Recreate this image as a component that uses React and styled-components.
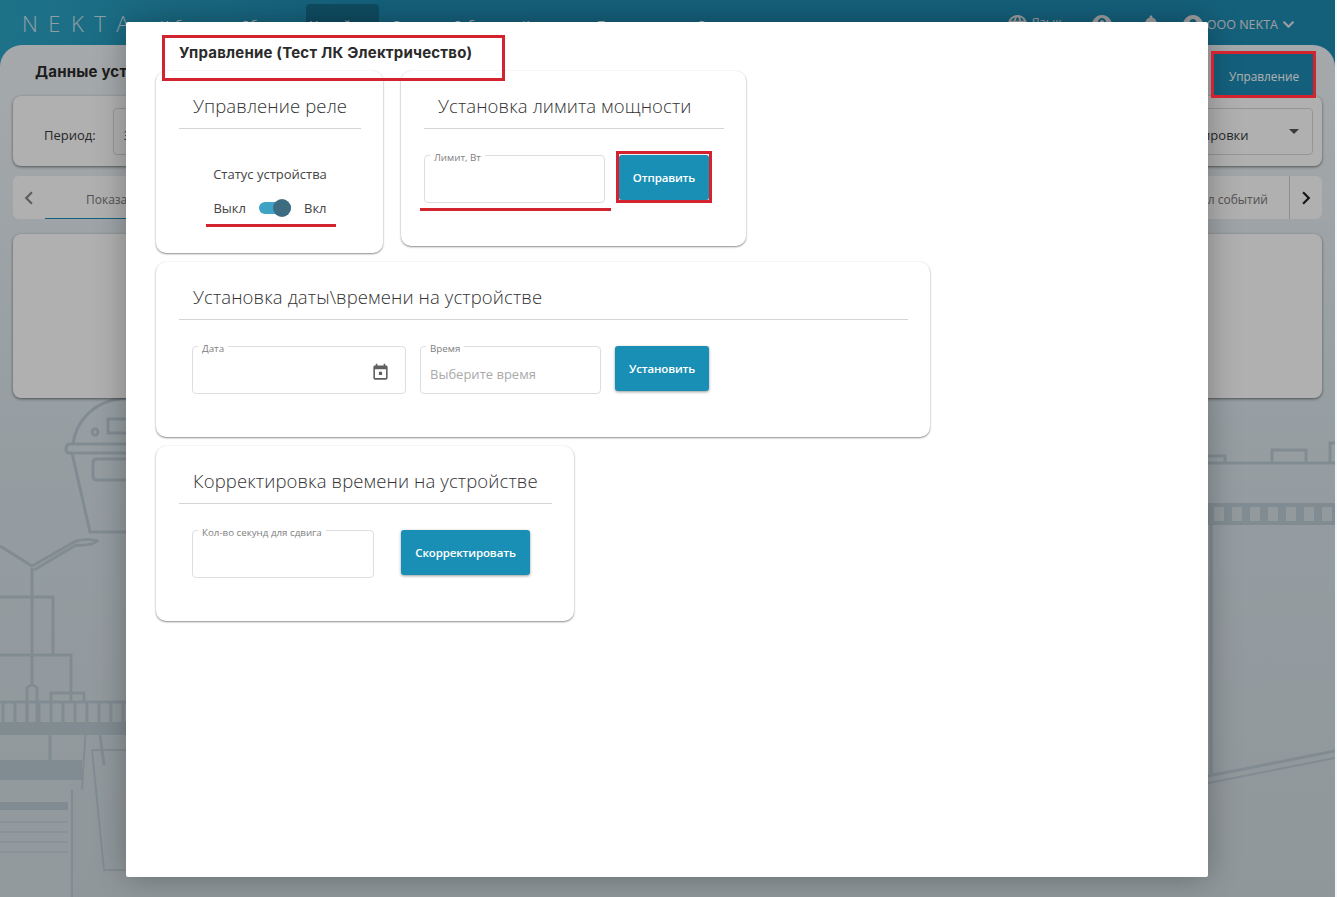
import React from 'react';
import styled, { createGlobalStyle } from 'styled-components';
import { FaChevronDown } from 'react-icons/fa';
import { MdLanguage, MdHelp, MdNotifications, MdAccountCircle, MdChevronLeft, MdChevronRight, MdArrowDropDown } from 'react-icons/md';

const GlobalStyle = createGlobalStyle`
  html, body {
    margin: 0;
    padding: 0;
    background: #f4f8fa;
    font-family: "Open Sans", "Liberation Sans", sans-serif;
    overflow: hidden;
  }
  * { box-sizing: border-box; }
`

const Shell = styled.div`
  position: relative;
  width: 1335px;
  height: 897px;
  overflow: hidden;
  background: linear-gradient(90deg, #2ba5c6 0, #1f8db4 26%, #1e8cb3 100%);
`

const Header = styled.header`
  display: flex;
  align-items: center;
  height: 45px;
  padding: 4px 40px 0 22px;
`

const Logo = styled.div`
  width: 134px;
  font-size: 22px;
  font-weight: 300;
  letter-spacing: 10.5px;
  color: #d3e6ec;
  margin-top: -4px;
  white-space: nowrap;
`

const Nav = styled.nav`
  display: flex;
  align-self: flex-start;
`

const NavItem = styled.a`
  width: ${(p) => p.$w}px;
  height: 41px;
  margin-right: ${(p) => (p.$active ? 9 : 0)}px;
  padding: 14px 4px 0;
  font-size: 12px;
  line-height: 16px;
  color: #fff;
  white-space: nowrap;
  border-radius: 4px 4px 0 0;
  background: ${(p) => (p.$active ? '#176f8e' : 'transparent')};
`

const HeaderRight = styled.div`
  display: flex;
  align-items: center;
  margin-left: auto;
  color: #e6e6e6;
  font-size: 12.5px;
`

const HeaderIcon = styled.span`
  display: flex;
  font-size: ${(p) => p.$size || 23}px;
  margin-left: ${(p) => p.$gap || 0}px;
`

const HeaderText = styled.span`
  margin-left: ${(p) => p.$gap || 0}px;
  margin-top: ${(p) => (p.$lift ? -5 : 0)}px;
  white-space: nowrap;
`

const Panel = styled.main`
  position: relative;
  height: 852px;
  padding: 0 13px;
  border-radius: 22px 22px 0 0;
  background: linear-gradient(180deg, #f0f5f8 0, #d9e5eb 45%, #d0dbe0 100%);
  overflow: hidden;
`

const Scenery = styled.svg`
  position: absolute;
  left: 0;
  top: -45px;
  width: 1335px;
  height: 897px;
`

const Content = styled.div`
  position: relative;
`

const TopRow = styled.div`
  display: flex;
  justify-content: space-between;
  height: 51px;
  padding: 8px 7px 0 22px;
`

const PageTitle = styled.h1`
  margin: 10px 0 0;
  font-family: Inter, "Liberation Sans", sans-serif;
  font-size: 15px;
  line-height: 18px;
  font-weight: 700;
  letter-spacing: 0.2px;
  color: #2b2b2b;
`

const ControlButton = styled.button`
  width: 102px;
  height: 43px;
  padding-top: 4px;
  border: 0;
  border-radius: 3px;
  background: #1d8bb4;
  color: #fff;
  font-family: inherit;
  font-size: 11.8px;
`

const FilterCard = styled.section`
  display: flex;
  justify-content: space-between;
  align-items: center;
  height: 70px;
  padding: 0 9px 0 31px;
  background: #fff;
  border-radius: 8px;
  box-shadow: 0 1px 3px rgba(0, 0, 0, 0.5);
`

const FilterGroup = styled.div`
  display: flex;
  align-items: center;
  gap: 17px;
`

const FilterText = styled.span`
  padding-top: 8px;
  font-size: 13px;
  color: #3a3a3a;
  white-space: nowrap;
`

const SelectBox = styled.div`
  display: flex;
  align-items: center;
  justify-content: space-between;
  width: ${(p) => p.$w}px;
  height: 47px;
  padding: 0 6px 0 10px;
  border: 1px solid #d8d8d8;
  border-radius: 4px;
`

const TabBar = styled.section`
  display: flex;
  align-items: stretch;
  height: 43px;
  margin-top: 10px;
  background: #fff;
  border-radius: 6px;
`

const TabArrow = styled.div`
  display: flex;
  align-items: center;
  justify-content: center;
  width: ${(p) => (p.$right ? 33 : 32)}px;
  font-size: 26px;
  color: ${(p) => (p.$right ? '#222' : '#888')};
  border-left: ${(p) => (p.$right ? '1px solid #ccc' : '0')};
`

const TabList = styled.div`
  display: flex;
  flex: 1;
  justify-content: space-between;
  align-items: center;
  font-size: 12px;
  color: #777;
`

const Tab = styled.span`
  align-self: stretch;
  display: flex;
  align-items: center;
  padding: 4px 0 0 41px;
  width: ${(p) => p.$w}px;
  border-bottom: ${(p) => (p.$active ? '1px solid #1d8bb4' : '0')};
  white-space: nowrap;
`

const ChartCard = styled.section`
  height: 164px;
  margin-top: 15px;
  background: #fff;
  border-radius: 8px;
  box-shadow: 0 1px 3px rgba(0, 0, 0, 0.5);
`

const Backdrop = styled.div`
  position: absolute;
  inset: 0;
  background: rgba(0, 0, 0, 0.31);
`

const Modal = styled.div`
  position: absolute;
  left: 126px;
  top: 22px;
  width: 1082px;
  height: 855px;
  padding: 22px 30px;
  background: #fff;
  border-radius: 2px;
  box-shadow: 0 0 32px rgba(0, 0, 0, 0.3);
`

const ModalTitle = styled.h2`
  margin: 0 0 9px 23px;
  font-family: Inter, "Liberation Sans", sans-serif;
  font-size: 15px;
  line-height: 18px;
  font-weight: 700;
  letter-spacing: 0.2px;
  color: #2b2b2b;
`

const Stack = styled.div`
  display: flex;
  flex-direction: column;
  gap: 9px;
`

const CardRow = styled.div`
  display: flex;
  align-items: flex-start;
  gap: 18px;
`

const Card = styled.section`
  width: ${(p) => p.$w}px;
  height: ${(p) => p.$h || 175}px;
  padding: 0 22px 0 23px;
  background: #fff;
  border-radius: 10px;
  box-shadow: 0 1px 2px rgba(0, 0, 0, 0.45), 0 0 2px rgba(0, 0, 0, 0.06);
`

const CardHeading = styled.h3`
  height: 58px;
  margin: 0 0 26px;
  padding: 22px 14px 0;
  border-bottom: 1px solid #d4d4d4;
  font-size: 18.5px;
  line-height: 26px;
  font-weight: 300;
  letter-spacing: 0.12px;
  color: #333;
  white-space: nowrap;
`

const FormRow = styled.div`
  display: flex;
  align-items: flex-start;
  gap: ${(p) => p.$gap || 14}px;
  padding-left: ${(p) => p.$inset || 0}px;
`

const Field = styled.div`
  position: relative;
  display: flex;
  align-items: center;
  justify-content: space-between;
  width: ${(p) => p.$w}px;
  height: 48px;
  padding: 8px 16px 0 9px;
  border: 1px solid #dedede;
  border-radius: 4px;
`

const FieldLabel = styled.label`
  position: absolute;
  left: 5px;
  top: -4px;
  padding: 0 4px;
  background: #fff;
  font-size: 9.75px;
  line-height: 12px;
  color: #808080;
  white-space: nowrap;
`

const Placeholder = styled.span`
  font-size: 13px;
  color: #aaa;
`

const CalendarIcon = styled.svg`
  width: 19px;
  height: 19px;
  margin: -4px -1px 0 auto;
  fill: #5f5f5f;
`

const ActionButton = styled.button`
  width: ${(p) => p.$w}px;
  height: 45px;
  border: 0;
  border-radius: 3px;
  background: #1a8fb5;
  color: #fff;
  font-family: inherit;
  font-size: 11.5px;
  font-weight: 600;
  letter-spacing: -0.15px;
  box-shadow: 0 1px 3px rgba(0, 0, 0, 0.4);
`

const RelayBody = styled.div`
  display: flex;
  flex-direction: column;
  align-items: center;
  gap: 16px;
  margin-top: 36px;
  font-size: 13px;
  line-height: 18px;
  color: #444;
`

const SwitchRow = styled.div`
  display: flex;
  align-items: center;
  gap: 13px;
`

const SwitchTrack = styled.span`
  position: relative;
  display: block;
  width: 32px;
  height: 12px;
  border-radius: 6px;
  background: #3fa3c6;
`

const SwitchKnob = styled.span`
  position: absolute;
  right: 0;
  top: -3px;
  width: 18px;
  height: 18px;
  border-radius: 50%;
  background: #3d6b80;
`

const Mark = styled.div`
  position: absolute;
  left: ${(p) => p.$x}px;
  top: ${(p) => p.$y}px;
  width: ${(p) => p.$w}px;
  height: ${(p) => p.$h}px;
  ${(p) => (p.$line ? 'background: #d2232e;' : 'border: 3px solid #d2232e;')}
`

const navItems = [
  ['Избранное', 81],
  ['Объекты', 69],
  ['Устройства', 73, true],
  ['Отчеты', 61],
  ['События', 69],
  ['Карта', 75],
  ['Пользователи', 100],
  ['Статистика', 90],
]

function Landscape() {
  const line = { fill: 'none', stroke: '#bccbd4', strokeWidth: 3 }
  const bars = Array.from({ length: 11 }, (_, i) => i * 12)
  const squares = Array.from({ length: 7 }, (_, i) => 1214 + i * 18)

  return (
    <Scenery viewBox="0 0 1335 897">
      <rect x="0" y="780" width="70" height="117" fill="#d5dfe4" />
      <g {...line}>
        <path d="M73 444 C76 420 95 400 126 398" />
        <path d="M126 444 H70 Q66 444 66 449 Q66 453 70 453 H126" />
        <circle cx="95" cy="432" r="3" />
        <path d="M126 419 H108 V433 H126" />
        <path d="M72 453 L90 532 H126" />
        <path d="M126 459 H97 Q93 459 93 463 V476 Q93 480 97 480 H126" />
        <path d="M0 546 L32 566 L76 541 Q90 538 97 541 Q92 546 76 545 L34 570" />
        <path d="M32 568 V684" />
        <path d="M0 597 H53 V655" />
        <path d="M0 655 H71 V702" />
        <path d="M27 722 V688 Q32 682 37 688 V722" />
        <path d="M51 702 V693 H84 V702" />
        <path d="M0 702 H126" />
        {bars.map((x) => <path key={x} d={`M${x + 3} 702 V722`} />)}
        <path d="M50 735 V760 M100 735 L104 765" />
        <path d="M0 822 H68 M0 832 H68 M0 842 H68 M0 852 H68" strokeWidth="1" />
        <path d="M82 790 L86 725 M72 790 V897" strokeWidth="2" />
        <path d="M92 750 H126 M92 750 L104 870 H126" strokeWidth="2" />

        <path d="M1208 463 H1335" />
        <path d="M1208 456 H1225 V463" />
        <path d="M1272 463 V450 H1306 V463" />
        <path d="M1335 443 H1330 V463" />
        <path d="M1211 525 V775" />
        <path d="M1208 776 L1335 751" />
        <path d="M1208 783 L1335 758" strokeWidth="2" />
      </g>
      <rect x="0" y="722" width="126" height="13" fill="#bccbd4" />
      <rect x="0" y="760" width="82" height="20" fill="#bccbd4" />
      <rect x="0" y="802" width="68" height="8" fill="#bccbd4" />
      <rect x="1208" y="503" width="127" height="22" fill="#bccbd4" />
      {squares.map((x) => <rect key={x} x={x} y="507" width="10" height="14" fill="#d5dfe4" />)}
    </Scenery>
  )
}

function App() {
  return (
    <Shell>
      <GlobalStyle />
      <Header>
        <Logo>NEKTA</Logo>
        <Nav>
          {navItems.map(([label, w, active]) => (
            <NavItem key={label} $w={w} $active={active}>{label}</NavItem>
          ))}
        </Nav>
        <HeaderRight>
          <HeaderIcon $size={23}><MdLanguage /></HeaderIcon>
          <HeaderText $gap={3} $lift>Язык</HeaderText>
          <HeaderIcon $size={24} $gap={28}><MdHelp /></HeaderIcon>
          <HeaderIcon $size={24} $gap={25}><MdNotifications /></HeaderIcon>
          <HeaderIcon $size={24} $gap={18}><MdAccountCircle /></HeaderIcon>
          <HeaderText $gap={2}>ООО NEKTA</HeaderText>
          <HeaderIcon $size={13} $gap={4}><FaChevronDown /></HeaderIcon>
        </HeaderRight>
      </Header>

      <Panel>
        <Landscape />
        <Content>
          <TopRow>
            <PageTitle>Данные устройства</PageTitle>
            <ControlButton>Управление</ControlButton>
          </TopRow>
          <FilterCard>
            <FilterGroup>
              <FilterText>Период:</FilterText>
              <SelectBox $w={200}><FilterText>За сегодня</FilterText></SelectBox>
            </FilterGroup>
            <SelectBox $w={183}>
              <FilterText>Без группировки</FilterText>
              <MdArrowDropDown size={24} color="#555" />
            </SelectBox>
          </FilterCard>
          <TabBar>
            <TabArrow><MdChevronLeft /></TabArrow>
            <TabList>
              <Tab $active $w={200}>Показания</Tab>
              <Tab $w={160}>Журнал событий</Tab>
            </TabList>
            <TabArrow $right><MdChevronRight /></TabArrow>
          </TabBar>
          <ChartCard />
        </Content>
      </Panel>

      <Backdrop />

      <Modal>
        <ModalTitle>Управление (Тест ЛК Электричество)</ModalTitle>
        <Stack>
          <CardRow>
            <Card $w={227} $h={182}>
              <CardHeading>Управление реле</CardHeading>
              <RelayBody>
                <span>Статус устройства</span>
                <SwitchRow>
                  <span>Выкл</span>
                  <SwitchTrack><SwitchKnob /></SwitchTrack>
                  <span>Вкл</span>
                </SwitchRow>
              </RelayBody>
            </Card>
            <Card $w={345}>
              <CardHeading>Установка лимита мощности</CardHeading>
              <FormRow>
                <Field $w={181}><FieldLabel>Лимит, Вт</FieldLabel></Field>
                <ActionButton $w={90}>Отправить</ActionButton>
              </FormRow>
            </Card>
          </CardRow>
          <Card $w={774}>
            <CardHeading>Установка даты\времени на устройстве</CardHeading>
            <FormRow $inset={13}>
              <Field $w={214}>
                <FieldLabel>Дата</FieldLabel>
                <CalendarIcon viewBox="0 0 24 24">
                  <path d="M19 3h-1V1h-2v2H8V1H6v2H5c-1.11 0-2 .9-2 2v14c0 1.1.89 2 2 2h14c1.1 0 2-.9 2-2V5c0-1.1-.9-2-2-2zm0 16H5V8h14v11zM10 11h4v4h-4z" />
                </CalendarIcon>
              </Field>
              <Field $w={181}>
                <FieldLabel>Время</FieldLabel>
                <Placeholder>Выберите время</Placeholder>
              </Field>
              <ActionButton $w={94}>Установить</ActionButton>
            </FormRow>
          </Card>
          <Card $w={418}>
            <CardHeading>Корректировка времени на устройстве</CardHeading>
            <FormRow $inset={13} $gap={27}>
              <Field $w={182}><FieldLabel>Кол-во секунд для сдвига</FieldLabel></Field>
              <ActionButton $w={129}>Скорректировать</ActionButton>
            </FormRow>
          </Card>
        </Stack>
      </Modal>

      <Mark $x={162} $y={35} $w={343} $h={46} />
      <Mark $x={1211} $y={51} $w={105} $h={47} />
      <Mark $x={616} $y={151} $w={96} $h={52} />
      <Mark $line $x={420} $y={208} $w={191} $h={3} />
      <Mark $line $x={206} $y={224} $w={130} $h={3} />
    </Shell>
  )
}

export default App;
